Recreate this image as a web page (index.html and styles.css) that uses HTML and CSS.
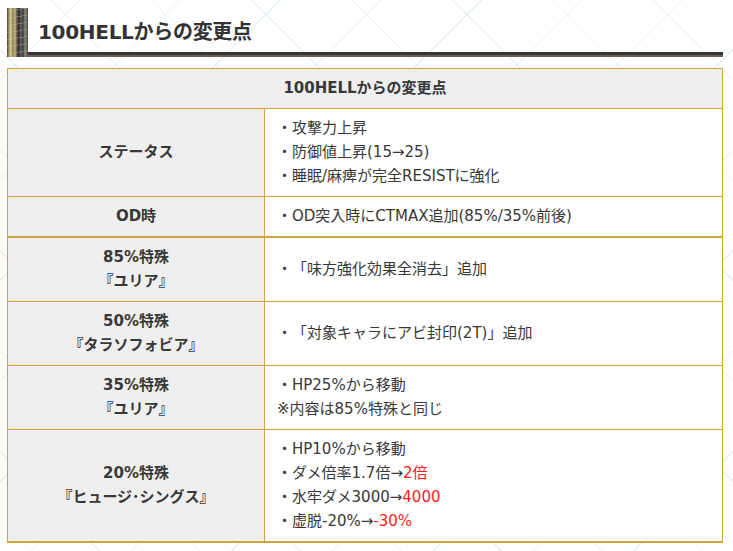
FILE: index.html
```html
<!DOCTYPE html>
<html lang="ja">
<head>
<meta charset="utf-8">
<title>100HELLからの変更点</title>
<link rel="stylesheet" href="styles.css">
</head>
<body>
<div class="page">
  <div class="heading">
    <div class="ornament"></div>
    <h2 class="title">100HELLからの変更点</h2>
  </div>
  <table class="changes">
    <colgroup>
      <col class="col-label">
      <col class="col-body">
    </colgroup>
    <thead>
      <tr><th colspan="2" class="head">100HELLからの変更点</th></tr>
    </thead>
    <tbody>
      <tr>
        <th class="label">ステータス</th>
        <td class="body">・攻撃力上昇<br>・防御値上昇(15→25)<br>・睡眠/麻痺が完全RESISTに強化</td>
      </tr>
      <tr class="thick">
        <th class="label">OD時</th>
        <td class="body">・OD突入時にCTMAX追加(85%/35%前後)</td>
      </tr>
      <tr>
        <th class="label">85%特殊<br>『ユリア』</th>
        <td class="body">・「味方強化効果全消去」追加</td>
      </tr>
      <tr>
        <th class="label">50%特殊<br>『タラソフォビア』</th>
        <td class="body">・「対象キャラにアビ封印(2T)」追加</td>
      </tr>
      <tr>
        <th class="label">35%特殊<br>『ユリア』</th>
        <td class="body">・HP25%から移動<br>※内容は85%特殊と同じ</td>
      </tr>
      <tr class="last">
        <th class="label">20%特殊<br>『ヒュージ･シングス』</th>
        <td class="body">・HP10%から移動<br>・ダメ倍率1.7倍→<span class="red">2倍</span><br>・水牢ダメ3000→<span class="red">4000</span><br>・虚脱-20%→<span class="red">-30%</span></td>
      </tr>
    </tbody>
  </table>
</div>
</body>
</html>
```
FILE: styles.css
```css
html, body {
  margin: 0;
  padding: 0;
}
body {
  background-color: #ffffff;
  background-image:
    repeating-linear-gradient(45deg, transparent 0 70px, rgba(195, 218, 236, 0.4) 70px 71px),
    repeating-linear-gradient(-45deg, transparent 0 70px, rgba(195, 218, 236, 0.4) 70px 71px);
  font-family: "DejaVu Sans", "Noto Sans CJK JP", sans-serif;
  color: #383838;
  width: 733px;
  height: 551px;
  overflow: hidden;
  text-spacing-trim: space-all;
}
.page {
  padding: 8px 10px 0 7px;
}
.heading {
  display: flex;
  height: 49px;
}
.ornament {
  width: 21px;
  height: 49px;
  flex: none;
  background:
    repeating-linear-gradient(170deg, rgba(255,255,255,0) 0 3px, rgba(200,190,160,0.35) 3px 4px, rgba(0,0,0,0) 4px 7px),
    linear-gradient(90deg, #3c3a36 0, #a99a6a 2px, #d9caa0 4px, #8a7a52 6px, #c8b884 8px, #5a5244 10px, #2e2d2c 12px, #6a6660 14px, #3a3936 16px, #8c8880 18px, #4a4844 21px);
}
.title {
  flex: 1;
  margin: 0;
  height: 44px;
  padding-left: 10px;
  display: flex;
  align-items: center;
  font-family: "DejaVu Sans", "Noto Sans CJK JP", sans-serif;
  font-weight: 700;
  font-size: 20px;
  color: #333333;
  border-bottom: 3px solid #3a3430;
  box-shadow: 0 2px 0 #6c6056;
  letter-spacing: -0.3px;
}
.changes {
  margin-top: 11px;
  width: 716px;
  border-collapse: collapse;
  font-size: 15px;
  line-height: 24px;
}
.col-label {
  width: 257px;
}
.changes th,
.changes td {
  border: 1px solid #d2a23c;
  padding: 7px 12px 8px;
}
.head,
.label {
  background: #efefef;
  font-weight: 700;
  color: #383838;
  text-align: center;
}
.body {
  background: #ffffff;
  text-align: left;
  color: #383838;
}
.thick th,
.thick td {
  border-bottom-width: 2px;
}
.last th,
.last td {
  border-bottom-width: 2px;
}
.red {
  color: #ff1a1a;
}
```
